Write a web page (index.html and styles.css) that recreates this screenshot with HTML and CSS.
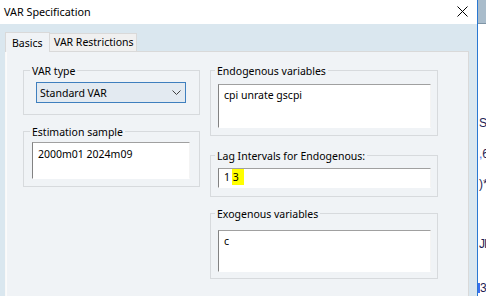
FILE: index.html
```html
<!DOCTYPE html>
<html>
<head>
<meta charset="utf-8">
<link rel="stylesheet" href="styles.css">
</head>
<body>
<div class="screen">
  <div class="dialog">
    <div class="titlebar">
      <span class="title">VAR Specification</span>
      <svg class="close" width="11" height="11" viewBox="0 0 11 11"><path d="M0.5 0.5 L10.5 10.5 M10.5 0.5 L0.5 10.5" stroke="#000" stroke-width="1" fill="none"/></svg>
    </div>
    <div class="body">
      <div class="tabs">
        <div class="tab active">Basics</div>
        <div class="tab">VAR Restrictions</div>
      </div>
      <div class="panel">
        <div class="col col-left">
          <div class="group g-type">
            <div class="legend">VAR type</div>
            <div class="combo">
              <span>Standard VAR</span>
              <svg class="chev" width="9" height="5" viewBox="0 0 9 5"><path d="M0.5 0.5 L4.5 4.5 L8.5 0.5" stroke="#404040" stroke-width="1" fill="none"/></svg>
            </div>
          </div>
          <div class="group g-sample">
            <div class="legend">Estimation sample</div>
            <div class="textbox tb-sample">2000m01 2024m09</div>
          </div>
        </div>
        <div class="col col-right">
          <div class="group g-endo">
            <div class="legend">Endogenous variables</div>
            <div class="textbox tb-endo">cpi unrate gscpi</div>
          </div>
          <div class="group g-lag">
            <div class="legend">Lag Intervals for Endogenous:</div>
            <div class="textbox tb-lag">1 <span class="sel">3</span></div>
          </div>
          <div class="group g-exo">
            <div class="legend">Exogenous variables</div>
            <div class="textbox tb-exo">c</div>
          </div>
        </div>
      </div>
    </div>
  </div>
  <div class="behind">
    <div class="behind-top"></div>
    <div class="behind-text">
      <div class="frag f1">S</div>
      <div class="frag f2"><span class="blue">,</span>6</div>
      <div class="frag f3">)*</div>
      <div class="frag f4">JI</div>
      <div class="frag f5"><span class="cursor"></span>3</div>
    </div>
  </div>
</div>
</body>
</html>
```

FILE: styles.css
```css
html, body {
  margin: 0;
  padding: 0;
}
body {
  font-family: "Noto Sans", "Open Sans", sans-serif;
  font-size: 10.5px;
  color: #000;
  background: #fff;
}
.screen {
  width: 486px;
  height: 296px;
  display: flex;
  overflow: hidden;
}
.dialog {
  width: 477px;
  flex: none;
  border-right: 1px solid #2a78d2;
  display: flex;
  flex-direction: column;
}
.titlebar {
  height: 24px;
  flex: none;
  background: #fff;
  display: flex;
  align-items: center;
  justify-content: space-between;
  padding: 0 9px 0 4px;
}
.title {
  font-size: 10.8px;
  line-height: 14px;
  margin-top: -1px;
}
.close {
  display: block;
  margin-top: -2px;
}
.body {
  flex: 1;
  background: #dae7ef;
  padding: 8px 8px 0 5px;
  display: flex;
  flex-direction: column;
}
.tabs {
  display: flex;
  align-items: flex-end;
  height: 19px;
  flex: none;
}
.tab {
  box-sizing: border-box;
  height: 18px;
  width: 87px;
  background: #f0f0f0;
  border: 1px solid #d9d9d9;
  border-bottom: none;
  border-left: none;
  padding-left: 4px;
  line-height: 16px;
}
.tab.active {
  width: 45px;
  height: 20px;
  background: #f0f3f6;
  border-left: 1px solid #d9d9d9;
  margin-bottom: -1px;
  padding-left: 6px;
  line-height: 20px;
  position: relative;
  z-index: 1;
}
.panel {
  flex: 1;
  background: #f0f3f6;
  border: 1px solid #d9d9d9;
  border-bottom: none;
  border-left-color: #f8f8f8;
  box-shadow: inset 1px 0 0 #fbfbfb;
  padding: 18px 0 0 17px;
  display: flex;
  gap: 10px;
}
.col {
  display: flex;
  flex-direction: column;
}
.col-left { width: 177px; }
.col-right { width: 228px; }
.group {
  box-sizing: border-box;
  border: 1px solid #d7dadd;
}
.legend {
  width: fit-content;
  margin: -7px 0 0 6px;
  padding: 0 2px;
  background: #f0f3f6;
  line-height: 14px;
  height: 14px;
}
.col-right .legend { margin-left: 4px; }
.g-type { height: 45px; }
.g-sample { height: 56px; margin-top: 16px; }
.g-endo { height: 66px; }
.g-lag { height: 42px; margin-top: 19px; }
.g-exo { height: 66px; margin-top: 16px; }

.combo {
  box-sizing: border-box;
  width: 150px;
  height: 21px;
  margin: 4px 0 0 12px;
  border: 1px solid #3f7fbe;
  background: #e3eaf1;
  display: flex;
  align-items: center;
  justify-content: space-between;
  padding: 0 4px 0 3px;
  line-height: 14px;
}
.chev { display: block; }

.textbox {
  box-sizing: border-box;
  background: #fff;
  border-top: 1px solid #a0a0a0;
  border-left: 1px solid #828282;
  border-right: 1px solid #f4f4f4;
  border-bottom: 1px solid #ffffff;
  padding: 3px 0 0 5px;
  line-height: 14px;
  white-space: nowrap;
}
.tb-sample {
  width: 158px;
  height: 37px;
  margin: 3px 0 0 8px;
  padding-top: 4px;
}
.tb-endo {
  width: 213px;
  height: 44px;
  margin: 6px 0 0 7px;
}
.tb-lag {
  width: 213px;
  height: 20px;
  margin: 5px 0 0 7px;
  padding-top: 0;
  line-height: 17px;
}
.sel {
  background: #ffff00;
  display: inline-block;
  padding: 0 5px 0 1px;
  margin-left: -1px;
  line-height: 16px;
}
.tb-exo {
  width: 213px;
  height: 42px;
  margin: 9px 0 0 7px;
}

.behind {
  flex: 1;
  display: flex;
  flex-direction: column;
  background: #fff;
}
.behind-top {
  height: 23px;
  background: #a9bccb;
  border-bottom: 1px solid #7f95a6;
  flex: none;
}
.behind-text {
  font-family: "Liberation Sans", Arial, sans-serif;
  font-size: 12px;
  line-height: 14px;
  color: #1e1e55;
  padding-left: 1px;
  white-space: nowrap;
}
.frag { height: 14px; }
.f1 { margin-top: 92px; }
.f2 { margin-top: 17px; }
.f3 { margin-top: 16px; }
.f4 { margin-top: 46px; letter-spacing: -1px; }
.f5 { margin-top: 30px; }
.blue { color: #3a6ff0; }
.cursor {
  display: inline-block;
  width: 2px;
  height: 10px;
  background: #3a6ff0;
  margin-left: -1px;
  vertical-align: -1px;
}
```
